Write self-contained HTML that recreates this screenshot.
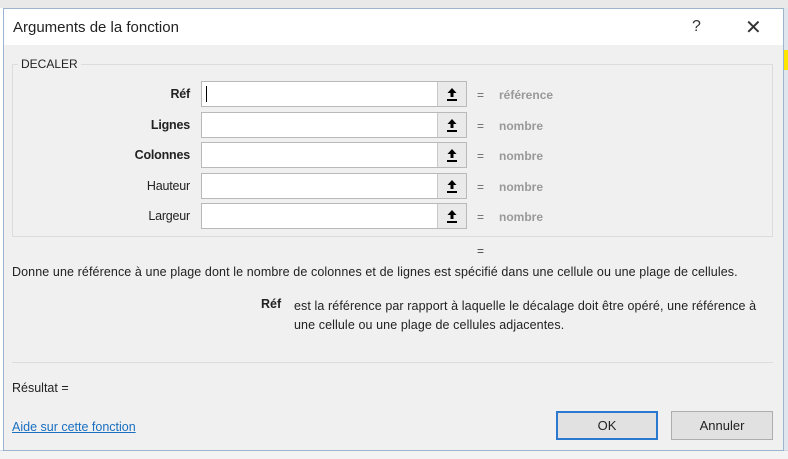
<!DOCTYPE html>
<html><head><meta charset="utf-8"><style>
*{margin:0;padding:0;box-sizing:border-box}
body{width:788px;height:459px;overflow:hidden;background:#fff;font-family:"Liberation Sans",sans-serif;font-size:13px;color:#222;position:relative}
.a{position:absolute;white-space:nowrap}
.lbl{position:absolute;right:598px;font-size:12.5px;letter-spacing:-0.2px}
.inp{position:absolute;left:201px;width:266px;height:26px;background:#fff;border:1px solid #b9b9b9}
.btn{position:absolute;left:235px;top:0;width:29px;height:24px;background:#eaeaea;border-left:1px solid #c8c8c8}
.btn svg{position:absolute;left:8px;top:5px}
.eq{position:absolute;left:477px;color:#666;font-size:12px}
.val{position:absolute;left:499px;color:#999;font-weight:bold;font-size:12px}
</style></head><body>
<div class="a" style="left:0;top:0;width:788px;height:8px;background:#e9e9e9"></div>
<div class="a" style="left:783px;top:8px;width:5px;height:451px;background:#dfe6ee"></div>
<div class="a" style="left:783px;top:50px;width:5px;height:20px;background:#ffe600"></div>
<div class="a" style="left:0;top:450px;width:788px;height:9px;background:#f3f3f3;border-top:1px solid #cfd8e4"></div>
<div class="a" style="left:3px;top:8px;width:781px;height:443px;background:#f0f0f0;border:1px solid #9db4cf"></div>
<div class="a" style="left:4px;top:9px;width:779px;height:36px;background:#fff"></div>
<div class="a" style="left:13px;top:19px;font-size:15px">Arguments de la fonction</div>
<div class="a" style="left:692px;top:18px;font-size:16px;color:#333">?</div>
<div class="a" style="left:745px;top:15px;font-size:20px;color:#333">✕</div>
<div class="a" style="left:12px;top:64px;width:761px;height:173px;border:1px solid #dcdcdc"></div>
<div class="a" style="left:18px;top:57px;background:#f0f0f0;padding:0 3px;font-size:12px">DECALER</div>

<div class="lbl" style="top:87px;font-weight:bold">Réf</div>
<div class="inp" style="top:81px"><div class="a" style="left:4px;top:4px;width:1px;height:16px;background:#000"></div><div class="btn"><svg width="12" height="14"><path d="M6 1L1.5 6H4.5V10H7.5V6H10.5Z" fill="#000"/><rect x="1" y="12" width="10" height="2" fill="#000"/></svg></div></div>
<div class="eq" style="top:88px">=</div><div class="val" style="top:88px">référence</div>

<div class="lbl" style="top:118px;font-weight:bold">Lignes</div>
<div class="inp" style="top:112px"><div class="btn"><svg width="12" height="14"><path d="M6 1L1.5 6H4.5V10H7.5V6H10.5Z" fill="#000"/><rect x="1" y="12" width="10" height="2" fill="#000"/></svg></div></div>
<div class="eq" style="top:119px">=</div><div class="val" style="top:119px">nombre</div>

<div class="lbl" style="top:148px;font-weight:bold">Colonnes</div>
<div class="inp" style="top:142px"><div class="btn"><svg width="12" height="14"><path d="M6 1L1.5 6H4.5V10H7.5V6H10.5Z" fill="#000"/><rect x="1" y="12" width="10" height="2" fill="#000"/></svg></div></div>
<div class="eq" style="top:149px">=</div><div class="val" style="top:149px">nombre</div>

<div class="lbl" style="top:179px">Hauteur</div>
<div class="inp" style="top:173px"><div class="btn"><svg width="12" height="14"><path d="M6 1L1.5 6H4.5V10H7.5V6H10.5Z" fill="#000"/><rect x="1" y="12" width="10" height="2" fill="#000"/></svg></div></div>
<div class="eq" style="top:180px">=</div><div class="val" style="top:180px">nombre</div>

<div class="lbl" style="top:209px">Largeur</div>
<div class="inp" style="top:203px"><div class="btn"><svg width="12" height="14"><path d="M6 1L1.5 6H4.5V10H7.5V6H10.5Z" fill="#000"/><rect x="1" y="12" width="10" height="2" fill="#000"/></svg></div></div>
<div class="eq" style="top:210px">=</div><div class="val" style="top:210px">nombre</div>

<div class="a" style="left:477px;top:244px;font-size:12px;color:#444">=</div>
<div class="a" style="left:12px;top:265px;font-size:12.5px;letter-spacing:0.1px">Donne une référence à une plage dont le nombre de colonnes et de lignes est spécifié dans une cellule ou une plage de cellules.</div>
<div class="a" style="left:261px;top:297px;font-size:12.5px;font-weight:bold">Réf</div>
<div class="a" style="left:294px;top:297px;font-size:12.5px;line-height:19px;letter-spacing:0.1px">est la référence par rapport à laquelle le décalage doit être opéré, une référence à<br>une cellule ou une plage de cellules adjacentes.</div>
<div class="a" style="left:12px;top:362px;width:761px;height:1px;background:#dcdcdc"></div>
<div class="a" style="left:12px;top:381px;font-size:12.5px">Résultat =</div>
<div class="a" style="left:12px;top:420px;font-size:12.5px;color:#1a6fc0;text-decoration:underline">Aide sur cette fonction</div>
<div class="a" style="left:556px;top:411px;width:102px;height:29px;background:#e1e1e1;border:2px solid #2b78d0;text-align:center;line-height:25px;font-size:13px">OK</div>
<div class="a" style="left:671px;top:411px;width:102px;height:29px;background:#e1e1e1;border:1px solid #adadad;text-align:center;line-height:27px;font-size:13px">Annuler</div>
</body></html>
